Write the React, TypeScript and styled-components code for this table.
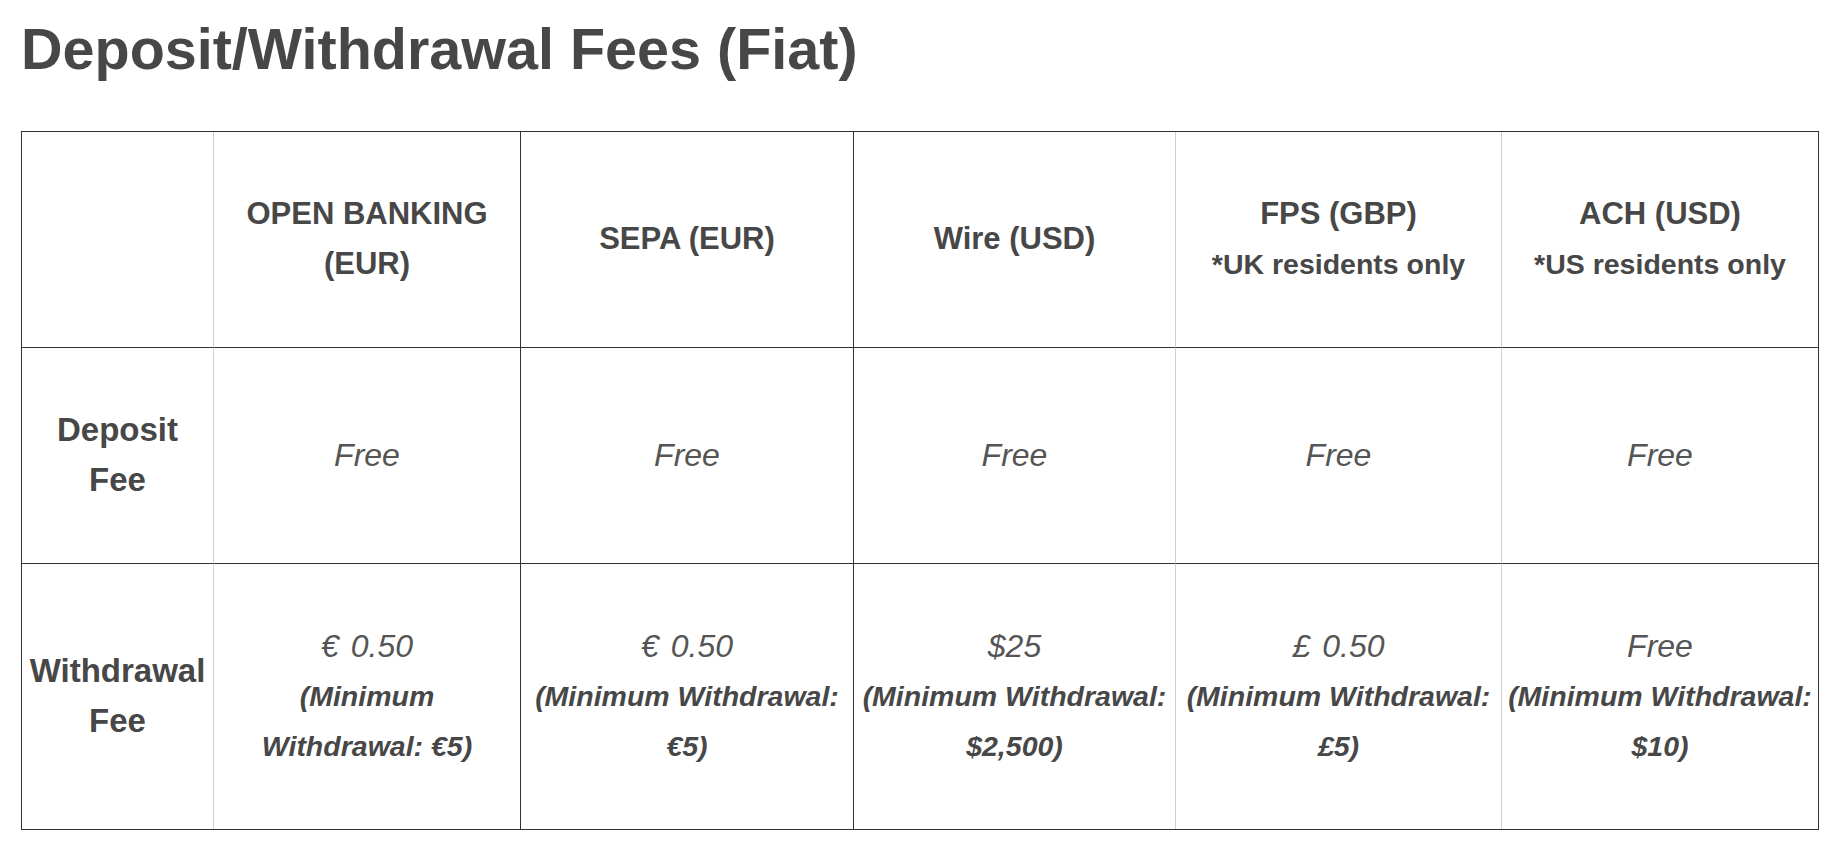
import styled, { createGlobalStyle } from "styled-components";

const GlobalStyle = createGlobalStyle`
  html, body {
    margin: 0;
    padding: 0;
    background: #ffffff;
  }

  body {
    font-family: "Liberation Sans", Arial, sans-serif;
    color: #474747;
  }
`;

type Method = {
  name: string;
  note?: string;
  deposit: string;
  fee: string;
  minimum: string;
  width: number;
  divider: "light" | "dark" | "none";
};

const methods: Method[] = [
  {
    name: "OPEN BANKING (EUR)",
    deposit: "Free",
    fee: "€ 0.50",
    minimum: "(Minimum Withdrawal: €5)",
    width: 307,
    divider: "dark",
  },
  {
    name: "SEPA (EUR)",
    deposit: "Free",
    fee: "€ 0.50",
    minimum: "(Minimum Withdrawal: €5)",
    width: 333,
    divider: "dark",
  },
  {
    name: "Wire (USD)",
    deposit: "Free",
    fee: "$25",
    minimum: "(Minimum Withdrawal: $2,500)",
    width: 322,
    divider: "light",
  },
  {
    name: "FPS (GBP)",
    note: "*UK residents only",
    deposit: "Free",
    fee: "£ 0.50",
    minimum: "(Minimum Withdrawal: £5)",
    width: 326,
    divider: "light",
  },
  {
    name: "ACH (USD)",
    note: "*US residents only",
    deposit: "Free",
    fee: "Free",
    minimum: "(Minimum Withdrawal: $10)",
    width: 316,
    divider: "none",
  },
];

function App() {
  return (
    <>
      <GlobalStyle />
      <Page>
        <Title>Deposit/Withdrawal Fees (Fiat)</Title>

        <FeeTable>
          <colgroup>
            <col style={{ width: 192 }} />
            {methods.map((m) => (
              <col key={m.name} style={{ width: m.width }} />
            ))}
          </colgroup>
          <tbody>
            <tr>
              <Cell divider="light" />
              {methods.map((m) => (
                <HeadCell key={m.name} divider={m.divider}>
                  {m.name}
                  {m.note && <Note>{m.note}</Note>}
                </HeadCell>
              ))}
            </tr>
            <tr>
              <LabelCell divider="light">
                Deposit
                <br />
                Fee
              </LabelCell>
              {methods.map((m) => (
                <Cell key={m.name} divider={m.divider}>
                  <Amount>{m.deposit}</Amount>
                </Cell>
              ))}
            </tr>
            <tr>
              <LabelCell divider="light" last>
                Withdrawal
                <br />
                Fee
              </LabelCell>
              {methods.map((m) => (
                <Cell key={m.name} divider={m.divider} last>
                  <Amount>{m.fee}</Amount>
                  <Minimum>{m.minimum}</Minimum>
                </Cell>
              ))}
            </tr>
          </tbody>
        </FeeTable>
      </Page>
    </>
  );
}

const Page = styled.div`
  padding: 16px 15px 14px 21px;
`;

const Title = styled.h2`
  margin: 0 0 49px;
  font-family: "Liberation Sans", Arial, sans-serif;
  font-size: 57.5px;
  font-weight: 700;
  line-height: 66px;
  color: #474747;
`;

const FeeTable = styled.table`
  width: 1796px;
  table-layout: fixed;
  border-collapse: separate;
  border-spacing: 0;
  border: 1px solid #333333;
`;

const dividerColor = {
  light: "#cfcfcf",
  dark: "#333333",
  none: "transparent",
};

const Cell = styled.td<{ divider: "light" | "dark" | "none"; last?: boolean }>`
  padding: 57px 3px 58px;
  text-align: center;
  vertical-align: middle;
  line-height: 50px;
  color: #474747;
  border-right: ${(p) =>
    p.divider === "none" ? "none" : `1px solid ${dividerColor[p.divider]}`};
  border-bottom: ${(p) => (p.last ? "none" : "1px solid #333333")};
`;

const HeadCell = styled(Cell)`
  font-size: 31px;
  font-weight: 700;
`;

const LabelCell = styled(Cell)`
  padding-left: 2px;
  padding-right: 2px;
  font-size: 33px;
  font-weight: 700;
`;

const Note = styled.span`
  display: block;
  font-size: 28.5px;
  line-height: 50px;
  font-weight: 700;
`;

const Amount = styled.span`
  display: block;
  font-family: "Liberation Sans", Arial, sans-serif;
  font-size: 32px;
  line-height: 50px;
  font-weight: 400;
  font-style: italic;
  word-spacing: 3px;
  color: #555555;
`;

const Minimum = styled.span`
  display: block;
  font-size: 28.5px;
  line-height: 50px;
  font-weight: 700;
  font-style: italic;
`;

export default App;
